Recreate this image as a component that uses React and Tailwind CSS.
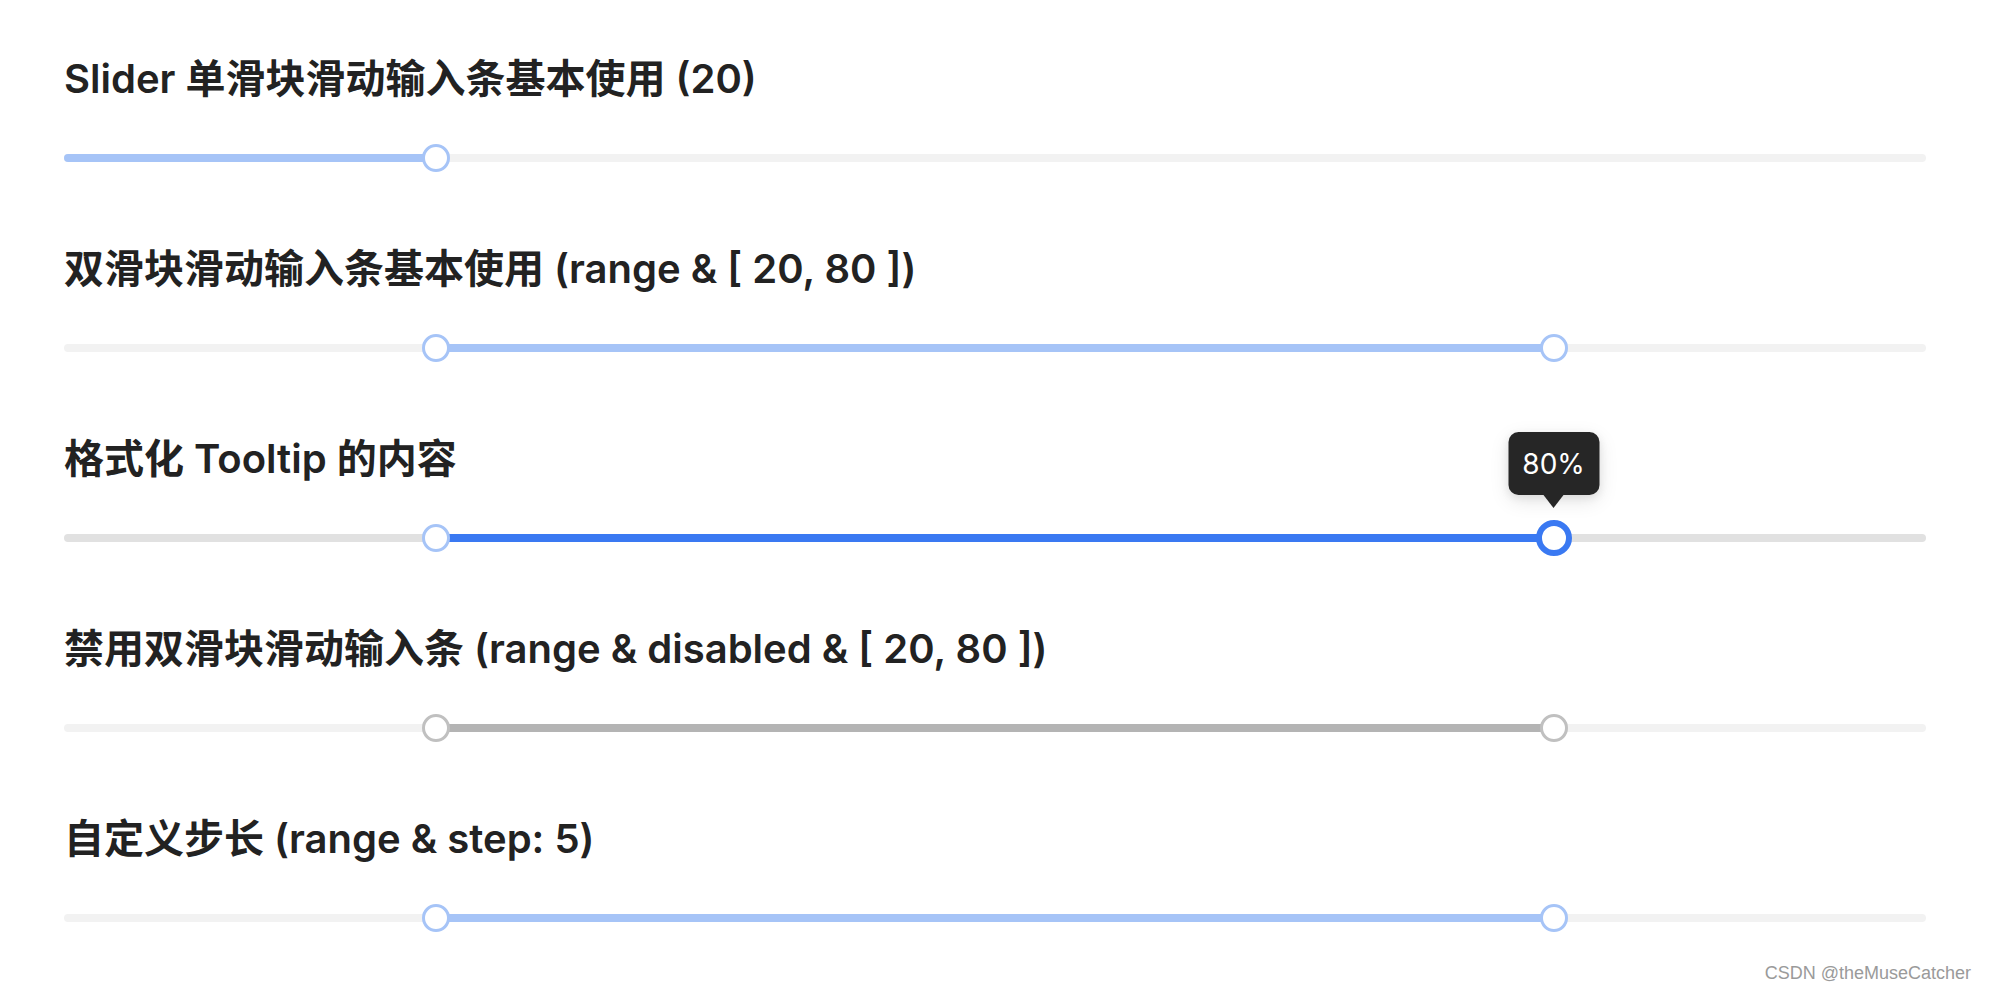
import React from "react";

const FONT = {
  fontFamily: '"Inter", "Noto Sans CJK SC", sans-serif',
};
const MARK_FONT = {
  fontFamily: '"Liberation Sans", "Noto Sans CJK SC", sans-serif',
};

function Handle({ pos, kind }) {
  const cls =
    kind === "active"
      ? "w-9 h-9 border-[6px] border-[#3a79f2]"
      : kind === "disabled"
      ? "w-7 h-7 border-[3px] border-[#c0c0c0]"
      : "w-7 h-7 border-[3px] border-[#a6c4f7]";
  return (
    <div
      className={`absolute top-1/2 -translate-x-1/2 -translate-y-1/2 rounded-full bg-white box-border ${cls}`}
      style={{ left: `${pos}%` }}
    />
  );
}

function Slider({ from = 0, to, kind = "light", handles, active, tooltip }) {
  const rail = kind === "hover" ? "bg-[#e1e1e1]" : "bg-[#f2f2f2]";
  const fill =
    kind === "hover"
      ? "bg-[#3a79f2]"
      : kind === "disabled"
      ? "bg-[#b4b4b4]"
      : "bg-[#a6c4f7]";
  return (
    <div className="relative h-10 flex items-center">
      <div className={`h-2 w-full rounded-full ${rail}`} />
      <div
        className={`absolute top-1/2 -translate-y-1/2 h-2 rounded-full ${fill}`}
        style={{ left: `${from}%`, width: `${to - from}%` }}
      />
      {handles.map((h, i) => (
        <Handle
          key={i}
          pos={h}
          kind={
            kind === "disabled"
              ? "disabled"
              : active === i
              ? "active"
              : "light"
          }
        />
      ))}
      {tooltip && (
        <div
          className="absolute bottom-[50px] -translate-x-1/2 flex flex-col items-center"
          style={{ left: `${tooltip.pos}%` }}
        >
          <div
            className="w-[91px] h-[63px] rounded-[10px] bg-[#262626] text-white text-[28px] flex items-center justify-center shadow-[0_6px_20px_rgba(0,0,0,0.10),0_3px_8px_rgba(0,0,0,0.08)]"
            style={FONT}
          >
            {tooltip.text}
          </div>
          <div className="w-0 h-0 border-l-[10px] border-r-[10px] border-t-[13px] border-l-transparent border-r-transparent border-t-[#262626]" />
        </div>
      )}
    </div>
  );
}

function Section({ title, children }) {
  return (
    <section className="h-[190px]">
      <h2
        className="h-12 leading-[48px] text-[40px] font-semibold text-[#222222] whitespace-nowrap"
        style={FONT}
      >
        {title}
      </h2>
      <div className="mt-[35px]">{children}</div>
    </section>
  );
}

export default function App() {
  return (
    <div className="relative w-full h-[990px] bg-white overflow-hidden">
      <div className="pl-[64px] pr-[74px] pt-[55px] flex flex-col">
        <Section title="Slider 单滑块滑动输入条基本使用 (20)">
          <Slider from={0} to={20} handles={[20]} />
        </Section>
        <Section title="双滑块滑动输入条基本使用 (range & [ 20, 80 ])">
          <Slider from={20} to={80} handles={[20, 80]} />
        </Section>
        <Section title="格式化 Tooltip 的内容">
          <Slider
            from={20}
            to={80}
            kind="hover"
            handles={[20, 80]}
            active={1}
            tooltip={{ pos: 80, text: "80%" }}
          />
        </Section>
        <Section title="禁用双滑块滑动输入条 (range & disabled & [ 20, 80 ])">
          <Slider from={20} to={80} kind="disabled" handles={[20, 80]} />
        </Section>
        <Section title="自定义步长 (range & step: 5)">
          <Slider from={20} to={80} handles={[20, 80]} />
        </Section>
      </div>
      <div
        className="absolute right-[29px] bottom-[7px] text-[18px] leading-5 text-[#9a9a9a]"
        style={MARK_FONT}
      >
        CSDN @theMuseCatcher
      </div>
    </div>
  );
}
